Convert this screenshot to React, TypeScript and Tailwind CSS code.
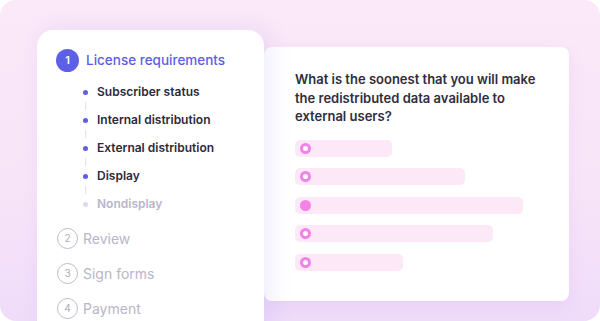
const subSteps = [
  { label: "Subscriber status", done: true },
  { label: "Internal distribution", done: true },
  { label: "External distribution", done: true },
  { label: "Display", done: true },
  { label: "Nondisplay", done: false },
];

const laterSteps = [
  { n: 2, label: "Review" },
  { n: 3, label: "Sign forms" },
  { n: 4, label: "Payment" },
];

const options = [
  { w: 97, selected: false },
  { w: 170, selected: false },
  { w: 228, selected: true },
  { w: 198, selected: false },
  { w: 108, selected: false },
];

function Sidebar() {
  return (
    <div className="relative z-10 h-[300px] w-[227px] shrink-0 rounded-t-2xl bg-white pl-[19px] pt-[19px] shadow-[6px_0_22px_rgba(140,110,230,0.14)]">
      <div className="flex items-center gap-[7px]">
        <span className="flex h-[23px] w-[23px] items-center justify-center rounded-full bg-[#5d5fe6] text-[11px] font-semibold text-white">
          1
        </span>
        <span className="text-[13.5px] font-medium text-[#5b5ee4]">License requirements</span>
      </div>

      <div className="ml-[27px] mt-[12px] flex flex-col">
        {subSteps.map((s, i) => (
          <div key={s.label} className="flex flex-col">
            {i > 0 && <div className="my-[2px] ml-[1.5px] h-[8px] w-[1.5px] bg-[#e2e0f2]" />}
            <div className="flex h-[16px] items-center gap-[9px]">
              <span className={`h-[5px] w-[5px] rounded-full ${s.done ? "bg-[#5d5fe6]" : "bg-[#dcdaf0]"}`} />
              <span className={`text-[12px] font-semibold ${s.done ? "text-[#2c2a3b]" : "text-[#b8b6c9]"}`}>
                {s.label}
              </span>
            </div>
          </div>
        ))}
      </div>

      <div className="mt-[16px] flex flex-col gap-[14px]">
        {laterSteps.map((s) => (
          <div key={s.n} className="flex h-[21px] items-center gap-[5px] pl-[1px]">
            <span className="flex h-[21px] w-[21px] items-center justify-center rounded-full border-[1.5px] border-[#bdbbcc] text-[10px] text-[#aeacc0]">
              {s.n}
            </span>
            <span className="text-[14px] text-[#b8b6c8]">{s.label}</span>
          </div>
        ))}
      </div>
    </div>
  );
}

function QuestionCard() {
  return (
    <div className="mt-[17px] h-[254px] w-[305px] shrink-0 rounded-lg bg-white pl-[31px] pt-[23px] shadow-[0_6px_16px_rgba(170,120,230,0.12)]">
      <p className="w-[250px] text-[13px] font-semibold leading-[18.5px] text-[#2f2d3e]">
        What is the soonest that you will make the redistributed data available to external users?
      </p>
      <div className="mt-[14px] flex flex-col gap-[11.5px]">
        {options.map((o, i) => (
          <div
            key={i}
            className="flex h-[17px] items-center rounded-[5px] bg-[#fce8f7] pl-[5px]"
            style={{ width: o.w }}
          >
            {o.selected ? (
              <span className="h-[11px] w-[11px] rounded-full bg-[#f182e6]" />
            ) : (
              <span className="h-[11px] w-[11px] rounded-full border-[3px] border-[#f182e6] bg-white" />
            )}
          </div>
        ))}
      </div>
    </div>
  );
}

export default function App() {
  return (
    <div className="h-[321px] w-[600px] bg-white" style={{ fontFamily: "Inter, 'Noto Sans', sans-serif" }}>
      <div className="flex h-full w-full overflow-hidden rounded-2xl bg-[linear-gradient(180deg,#fbe8f8_0%,#f8e4f8_60%,#efdcfa_100%)] pl-[37px] pt-[30px]">
        <Sidebar />
        <QuestionCard />
      </div>
    </div>
  );
}
